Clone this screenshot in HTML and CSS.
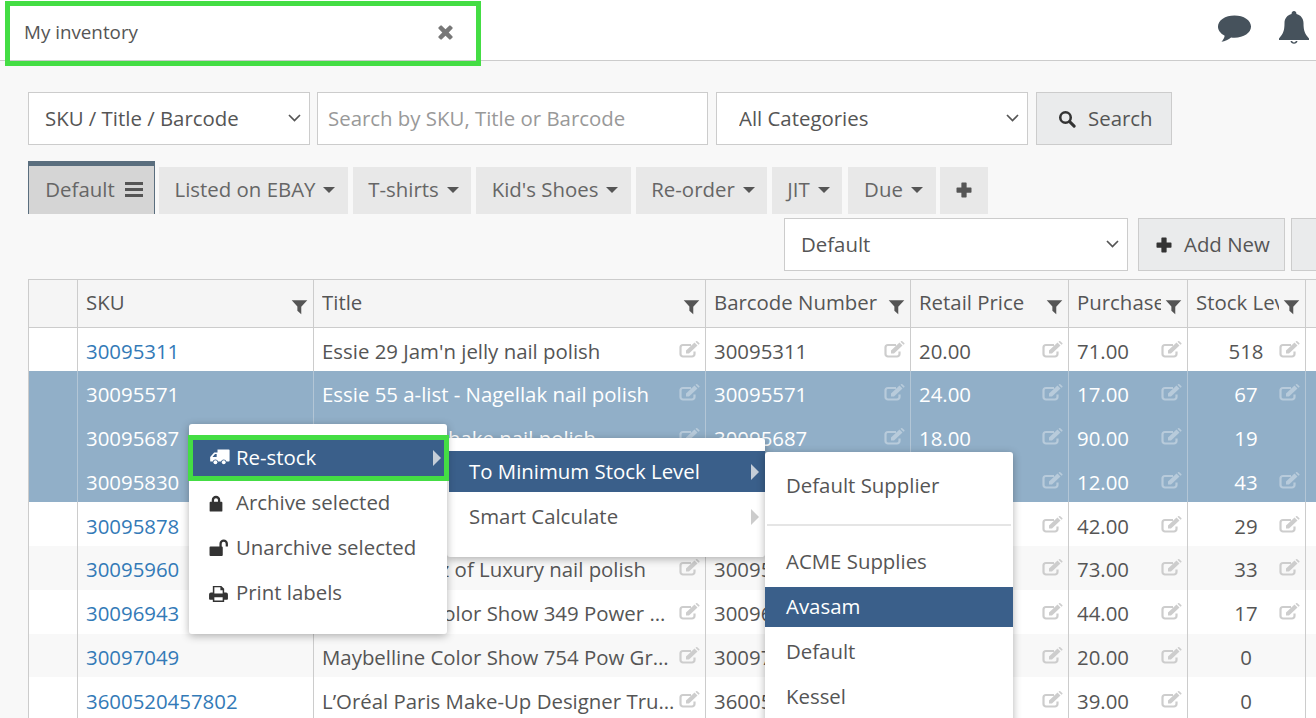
FILE: index.html
```html
<!DOCTYPE html>
<html lang="en">
<head>
<meta charset="utf-8">
<title>My inventory</title>
<link rel="stylesheet" href="styles.css">
</head>
<body>
<svg class="defs" width="0" height="0" aria-hidden="true">
  <symbol id="i-filter" viewBox="0 0 24 24"><path d="M1 3h22l-8.500 9.500V23l-5.500-5v-6z"/></symbol>
  <symbol id="i-edit" viewBox="0 0 21 17"><path d="M15.500 10.500V13a2.500 2.500 0 0 1-2.500 2.500H4A2.500 2.500 0 0 1 1.500 13V6.500A2.500 2.500 0 0 1 4 4h8" fill="none" stroke="currentColor" stroke-width="2.200"/><path d="M7 12.500V9.500L15.500 1.500l3 3L10 12.500zM16.500.8 17.500 0h.5l2.500 2.300v.6l-1 .9z"/></symbol>
  <symbol id="i-x" viewBox="0 0 24 24"><path d="M12 7.500 17.200 2.300a1.500 1.500 0 0 1 2.100 0l2.400 2.400a1.500 1.500 0 0 1 0 2.100L16.500 12l5.200 5.200a1.500 1.500 0 0 1 0 2.100l-2.400 2.400a1.500 1.500 0 0 1-2.100 0L12 16.500l-5.200 5.200a1.500 1.500 0 0 1-2.100 0l-2.400-2.400a1.500 1.500 0 0 1 0-2.100L7.500 12 2.300 6.800a1.500 1.500 0 0 1 0-2.100l2.400-2.400a1.500 1.500 0 0 1 2.100 0z"/></symbol>
  <symbol id="i-comment" viewBox="0 0 36 30"><path d="M18 1C8.500 1 1 6 1 12.500c0 3.900 2.700 7.300 6.900 9.400-.4 2.400-1.700 4.500-3.300 6.100 3.500-.3 7.300-2 9.900-4.300 1.100.2 2.300.3 3.500.3 9.500 0 17-5 17-11.500S27.500 1 18 1z"/></symbol>
  <symbol id="i-bell" viewBox="0 0 32 34"><path d="M16 1a2.500 2.500 0 0 0-2.400 3C9.300 5 6.500 8.500 6.500 13c0 8-1.500 11-5.500 15.500V30h30v-1.500C27 24 25.500 21 25.500 13c0-4.500-2.800-8-7.100-9A2.500 2.500 0 0 0 16 1z"/><path d="M12.500 31a3.600 3.600 0 0 0 7 0h-1.600a2 2 0 0 1-3.800 0z"/></symbol>
  <symbol id="i-search" viewBox="0 0 24 24"><circle cx="10" cy="10" r="7" fill="none" stroke="currentColor" stroke-width="3.400"/><path d="M15.500 15.500 21.500 21.500" fill="none" stroke="currentColor" stroke-width="4" stroke-linecap="round"/></symbol>
  <symbol id="i-plus" viewBox="0 0 24 24"><path d="M9.500 2h5a1 1 0 0 1 1 1v5.500H21a1 1 0 0 1 1 1v5a1 1 0 0 1-1 1h-5.500V21a1 1 0 0 1-1 1h-5a1 1 0 0 1-1-1v-5.500H3a1 1 0 0 1-1-1v-5a1 1 0 0 1 1-1h5.500V3a1 1 0 0 1 1-1z"/></symbol>
  <symbol id="i-truck" viewBox="0 0 24 20"><path fill-rule="evenodd" d="M9 1h13.500a1 1 0 0 1 1 1v12.500a1 1 0 0 1-1 1h-2.800a3.300 3.300 0 0 0-6.400 0H9.700a3.300 3.300 0 0 0-6.400 0H1a.8.800 0 0 1-.8-.8V10L5 4.600h4zM6 6.400 3 10h5V6.400z"/><circle cx="6.500" cy="16.300" r="2.300"/><circle cx="16.500" cy="16.300" r="2.300"/></symbol>
  <symbol id="i-lock" viewBox="0 0 16 20"><path fill-rule="evenodd" d="M3 8V6a5 5 0 0 1 10 0v2h1.500a1 1 0 0 1 1 1v9.500a1 1 0 0 1-1 1h-13a1 1 0 0 1-1-1V9a1 1 0 0 1 1-1zm2.700 0h4.600V6a2.300 2.300 0 0 0-4.600 0z"/></symbol>
  <symbol id="i-unlock" viewBox="0 0 20 18"><path d="M1.500 8H11V5a4.500 4.500 0 0 1 9 0v3h-2.400V5a2.100 2.100 0 0 0-4.200 0v3h.1a1 1 0 0 1 1 1v8a1 1 0 0 1-1 1H1.500a1 1 0 0 1-1-1V9a1 1 0 0 1 1-1z"/></symbol>
  <symbol id="i-print" viewBox="0 0 20 18"><path fill-rule="evenodd" d="M4 1h9l3 3v4h2a2 2 0 0 1 2 2v4.500a1 1 0 0 1-1 1h-3V18H4v-2.500H1a1 1 0 0 1-1-1V10a2 2 0 0 1 2-2h2zm1.600 1.500V9h8.800V5.500H12V2.500zM5.600 13v3.400h8.800V13z"/></symbol>
  <symbol id="i-chev" viewBox="0 0 13 8"><path d="M1 1l5.500 5.500L12 1" fill="none" stroke="currentColor" stroke-width="1.700"/></symbol>
</svg>

<div class="page">
  <header class="topbar">
    <div class="tab-outline">
      <span class="tab-title">My inventory</span>
      <svg class="icon tab-close"><use href="#i-x"/></svg>
    </div>
    <div class="top-icons">
      <svg class="icon icon-comment"><use href="#i-comment"/></svg>
      <svg class="icon icon-bell"><use href="#i-bell"/></svg>
    </div>
  </header>

  <main class="content">
    <div class="search-row">
      <div class="select-wrap field-type"><select class="field"><option>SKU / Title / Barcode</option></select><svg class="icon chev"><use href="#i-chev"/></svg></div>
      <input class="field field-search" type="text" placeholder="Search by SKU, Title or Barcode">
      <div class="select-wrap field-cat"><select class="field"><option>All Categories</option></select><svg class="icon chev"><use href="#i-chev"/></svg></div>
      <button class="btn btn-search"><svg class="icon icon-btn"><use href="#i-search"/></svg>Search</button>
    </div>

    <nav class="views">
      <div class="view view-active">Default<span class="bars"><i></i><i></i><i></i></span></div>
      <div class="view view-ebay">Listed on EBAY<span class="caret"></span></div>
      <div class="view view-tshirt">T-shirts<span class="caret"></span></div>
      <div class="view view-kids">Kid's Shoes<span class="caret"></span></div>
      <div class="view view-reorder">Re-order<span class="caret"></span></div>
      <div class="view view-jit">JIT<span class="caret"></span></div>
      <div class="view view-due">Due<span class="caret"></span></div>
      <div class="view view-plus"><svg class="icon icon-plus"><use href="#i-plus"/></svg></div>
    </nav>

    <div class="action-row">
      <div class="select-wrap field-view"><select class="field"><option>Default</option></select><svg class="icon chev"><use href="#i-chev"/></svg></div>
      <button class="btn btn-add"><svg class="icon icon-btn"><use href="#i-plus"/></svg>Add New</button>
      <button class="btn btn-more"></button>
    </div>

    <table class="grid">
      <colgroup>
        <col class="c-check"><col class="c-sku"><col class="c-title"><col class="c-bar"><col class="c-retail"><col class="c-purchase"><col class="c-stock"><col class="c-rest">
      </colgroup>
      <thead>
        <tr>
          <th></th>
          <th><div class="head"><span class="head-label">SKU</span><svg class="icon icon-filter"><use href="#i-filter"/></svg></div></th>
          <th><div class="head"><span class="head-label">Title</span><svg class="icon icon-filter"><use href="#i-filter"/></svg></div></th>
          <th><div class="head"><span class="head-label">Barcode Number</span><svg class="icon icon-filter"><use href="#i-filter"/></svg></div></th>
          <th><div class="head"><span class="head-label">Retail Price</span><svg class="icon icon-filter"><use href="#i-filter"/></svg></div></th>
          <th><div class="head"><span class="head-label">Purchase Price</span><svg class="icon icon-filter"><use href="#i-filter"/></svg></div></th>
          <th><div class="head"><span class="head-label">Stock Level</span><svg class="icon icon-filter"><use href="#i-filter"/></svg></div></th>
          <th></th>
        </tr>
      </thead>
      <tbody>
        <tr>
          <td></td><td><a class="sku">30095311</a></td>
          <td><div class="cell"><span class="txt">Essie 29 Jam'n jelly nail polish</span><svg class="icon icon-edit"><use href="#i-edit"/></svg></div></td>
          <td><div class="cell"><span class="txt">30095311</span><svg class="icon icon-edit"><use href="#i-edit"/></svg></div></td>
          <td><div class="cell"><span class="txt">20.00</span><svg class="icon icon-edit"><use href="#i-edit"/></svg></div></td>
          <td><div class="cell"><span class="txt">71.00</span><svg class="icon icon-edit"><use href="#i-edit"/></svg></div></td>
          <td><div class="cell cell-num"><span class="num">518</span><svg class="icon icon-edit"><use href="#i-edit"/></svg></div></td><td></td>
        </tr>
        <tr class="selected">
          <td></td><td><a class="sku">30095571</a></td>
          <td><div class="cell"><span class="txt">Essie 55 a-list - Nagellak nail polish</span><svg class="icon icon-edit"><use href="#i-edit"/></svg></div></td>
          <td><div class="cell"><span class="txt">30095571</span><svg class="icon icon-edit"><use href="#i-edit"/></svg></div></td>
          <td><div class="cell"><span class="txt">24.00</span><svg class="icon icon-edit"><use href="#i-edit"/></svg></div></td>
          <td><div class="cell"><span class="txt">17.00</span><svg class="icon icon-edit"><use href="#i-edit"/></svg></div></td>
          <td><div class="cell cell-num"><span class="num">67</span><svg class="icon icon-edit"><use href="#i-edit"/></svg></div></td><td></td>
        </tr>
        <tr class="selected">
          <td></td><td><a class="sku">30095687</a></td>
          <td><div class="cell"><span class="txt">Essie 30 Lilt Shake nail polish</span><svg class="icon icon-edit"><use href="#i-edit"/></svg></div></td>
          <td><div class="cell"><span class="txt">30095687</span><svg class="icon icon-edit"><use href="#i-edit"/></svg></div></td>
          <td><div class="cell"><span class="txt">18.00</span><svg class="icon icon-edit"><use href="#i-edit"/></svg></div></td>
          <td><div class="cell"><span class="txt">90.00</span><svg class="icon icon-edit"><use href="#i-edit"/></svg></div></td>
          <td><div class="cell cell-num"><span class="num">19</span><svg class="icon icon-edit icon-off"><use href="#i-edit"/></svg></div></td><td></td>
        </tr>
        <tr class="selected">
          <td></td><td><a class="sku">30095830</a></td>
          <td><div class="cell"><span class="txt">Essie 12 Ballet Slippers nail polish</span><svg class="icon icon-edit"><use href="#i-edit"/></svg></div></td>
          <td><div class="cell"><span class="txt">30095830</span><svg class="icon icon-edit"><use href="#i-edit"/></svg></div></td>
          <td><div class="cell"><span class="txt">31.00</span><svg class="icon icon-edit"><use href="#i-edit"/></svg></div></td>
          <td><div class="cell"><span class="txt">12.00</span><svg class="icon icon-edit"><use href="#i-edit"/></svg></div></td>
          <td><div class="cell cell-num"><span class="num">43</span><svg class="icon icon-edit"><use href="#i-edit"/></svg></div></td><td></td>
        </tr>
        <tr>
          <td></td><td><a class="sku">30095878</a></td>
          <td><div class="cell"><span class="txt">Essie 24 Borrowed nail polish</span><svg class="icon icon-edit"><use href="#i-edit"/></svg></div></td>
          <td><div class="cell"><span class="txt">30095878</span><svg class="icon icon-edit"><use href="#i-edit"/></svg></div></td>
          <td><div class="cell"><span class="txt">26.00</span><svg class="icon icon-edit"><use href="#i-edit"/></svg></div></td>
          <td><div class="cell"><span class="txt">42.00</span><svg class="icon icon-edit"><use href="#i-edit"/></svg></div></td>
          <td><div class="cell cell-num"><span class="num">29</span><svg class="icon icon-edit"><use href="#i-edit"/></svg></div></td><td></td>
        </tr>
        <tr class="alt">
          <td></td><td><a class="sku">30095960</a></td>
          <td><div class="cell"><span class="txt">Essie 50 Whiz of Luxury nail polish</span><svg class="icon icon-edit"><use href="#i-edit"/></svg></div></td>
          <td><div class="cell"><span class="txt">30095960</span><svg class="icon icon-edit"><use href="#i-edit"/></svg></div></td>
          <td><div class="cell"><span class="txt">35.00</span><svg class="icon icon-edit"><use href="#i-edit"/></svg></div></td>
          <td><div class="cell"><span class="txt">73.00</span><svg class="icon icon-edit"><use href="#i-edit"/></svg></div></td>
          <td><div class="cell cell-num"><span class="num">33</span><svg class="icon icon-edit"><use href="#i-edit"/></svg></div></td><td></td>
        </tr>
        <tr>
          <td></td><td><a class="sku">30096943</a></td>
          <td><div class="cell"><span class="txt">Maybelline Color Show 349 Power Pink nail</span><svg class="icon icon-edit"><use href="#i-edit"/></svg></div></td>
          <td><div class="cell"><span class="txt">30096943</span><svg class="icon icon-edit"><use href="#i-edit"/></svg></div></td>
          <td><div class="cell"><span class="txt">28.00</span><svg class="icon icon-edit"><use href="#i-edit"/></svg></div></td>
          <td><div class="cell"><span class="txt">44.00</span><svg class="icon icon-edit"><use href="#i-edit"/></svg></div></td>
          <td><div class="cell cell-num"><span class="num">17</span><svg class="icon icon-edit"><use href="#i-edit"/></svg></div></td><td></td>
        </tr>
        <tr class="alt">
          <td></td><td><a class="sku">30097049</a></td>
          <td><div class="cell"><span class="txt">Maybelline Color Show 754 Pow Grey nail polish</span><svg class="icon icon-edit"><use href="#i-edit"/></svg></div></td>
          <td><div class="cell"><span class="txt">30097049</span><svg class="icon icon-edit"><use href="#i-edit"/></svg></div></td>
          <td><div class="cell"><span class="txt">22.00</span><svg class="icon icon-edit"><use href="#i-edit"/></svg></div></td>
          <td><div class="cell"><span class="txt">20.00</span><svg class="icon icon-edit"><use href="#i-edit"/></svg></div></td>
          <td><div class="cell cell-num"><span class="num">0</span><svg class="icon icon-edit icon-off"><use href="#i-edit"/></svg></div></td><td></td>
        </tr>
        <tr>
          <td></td><td><a class="sku">3600520457802</a></td>
          <td><div class="cell"><span class="txt">L’Oréal Paris Make-Up Designer Trucco Lips</span><svg class="icon icon-edit"><use href="#i-edit"/></svg></div></td>
          <td><div class="cell"><span class="txt">3600520457802</span><svg class="icon icon-edit"><use href="#i-edit"/></svg></div></td>
          <td><div class="cell"><span class="txt">27.00</span><svg class="icon icon-edit"><use href="#i-edit"/></svg></div></td>
          <td><div class="cell"><span class="txt">39.00</span><svg class="icon icon-edit"><use href="#i-edit"/></svg></div></td>
          <td><div class="cell cell-num"><span class="num">0</span><svg class="icon icon-edit icon-off"><use href="#i-edit"/></svg></div></td><td></td>
        </tr>
      </tbody>
    </table>
  </main>

  <ul class="menu menu-main">
    <li class="item item-restock"><svg class="icon icon-m icon-truck"><use href="#i-truck"/></svg>Re-stock<span class="arrow arrow-on"></span></li>
    <li class="item"><svg class="icon icon-m icon-lock"><use href="#i-lock"/></svg>Archive selected</li>
    <li class="item"><svg class="icon icon-m icon-unlock"><use href="#i-unlock"/></svg>Unarchive selected</li>
    <li class="item"><svg class="icon icon-m icon-print"><use href="#i-print"/></svg>Print labels</li>
  </ul>

  <ul class="menu menu-sub">
    <li class="sub-item sub-on">To Minimum Stock Level<span class="arrow arrow-on"></span></li>
    <li class="sub-item">Smart Calculate<span class="arrow"></span></li>
  </ul>

  <ul class="menu menu-supplier">
    <li class="sup-item sup-first">Default Supplier</li>
    <li class="sup-divider"></li>
    <li class="sup-item">ACME Supplies</li>
    <li class="sup-item sup-on">Avasam</li>
    <li class="sup-item">Default</li>
    <li class="sup-item">Kessel</li>
  </ul>
</div>
</body>
</html>
```

FILE: styles.css
```css
* { box-sizing: border-box; }
html, body { margin: 0; padding: 0; height: 100%; }
body {
  font-family: "Open Sans", "Liberation Sans", sans-serif;
  font-size: 20.4px;
  color: #555;
  background: #f8f8f8;
  overflow: hidden;
}
.defs { position: absolute; }
.icon { display: block; fill: currentColor; flex: none; }

.page { position: relative; width: 1316px; height: 718px; overflow: hidden; }

/* top bar */
.topbar {
  height: 61px;
  background: #fff;
  border-bottom: 1px solid #ccc;
  display: flex;
  justify-content: space-between;
  align-items: flex-start;
}
.tab-outline {
  position: relative;
  z-index: 2;
  width: 476px;
  height: 65px;
  margin: 1px 0 0 5px;
  border: 5px solid #44dd44;
  background: linear-gradient(#fff 54px, #ccc 54px);
  display: flex;
  align-items: flex-start;
  justify-content: space-between;
  padding: 12px 22px 0 14px;
  font-size: 18.800px;
  line-height: 28px;
}
.tab-title { color: #555; }
.tab-close { width: 17px; height: 17px; margin-top: 6px; color: #777; }
.top-icons { display: flex; gap: 26px; padding: 14px 6px 0 0; color: #46525c; align-items: flex-start; }
.icon-comment { width: 35px; height: 30px; }
.icon-bell { width: 32px; height: 34px; margin-top: -4px; }

/* content */
.content { padding: 31px 0 0 28px; width: 1500px; }
.search-row { display: flex; height: 53px; }
.field {
  height: 53px;
  width: 100%;
  background-color: #fff;
  border: 1px solid #ccc;
  border-radius: 0;
  font: inherit;
  color: #555;
  outline: none;
}
select.field { appearance: none; -webkit-appearance: none; padding: 0 30px 2px 16px; }
.select-wrap { position: relative; flex: none; }
.chev { position: absolute; right: 9px; top: 22px; width: 13px; height: 8px; color: #555; pointer-events: none; }
.field-type { width: 282px; margin-right: 7px; }
.field-search { width: 391px; margin-right: 8px; padding: 0 10px 2px; }
.field-search::placeholder { color: #999; opacity: 1; }
.field-cat { width: 312px; margin-right: 8px; }
.field-cat select.field { padding-left: 22px; }
.btn {
  height: 53px;
  display: flex;
  align-items: center;
  background: #eaebec;
  border: 1px solid #ccc;
  font: inherit;
  color: #555;
  padding: 0 0 2px;
}
.icon-btn { width: 18px; height: 18px; margin-top: 2px; color: #333; }
.btn-search { width: 136px; padding-left: 21px; gap: 12px; }
.btn-add { width: 147px; padding-left: 16px; gap: 11px; margin-left: 10px; }
.btn-more { width: 80px; margin-left: 6px; }

/* saved views */
.views { display: flex; align-items: flex-end; height: 53px; margin-top: 16px; gap: 4px; }
.view {
  height: 47px;
  background: #e8e8e8;
  display: flex;
  align-items: center;
  justify-content: center;
  color: #666;
  padding: 0 0 4px 3px;
  flex: none;
}
.view-active {
  height: 53px;
  width: 127px;
  background: #d5d5d5;
  border: 1px solid #5a6e7e;
  border-top-width: 5px;
  border-bottom: 0;
  gap: 10px;
  padding: 0 0 2px 5px;
}
.view-ebay { width: 189px; }
.view-tshirt { width: 118px; margin-left: 1px; }
.view-kids { width: 155px; margin-left: 1px; }
.view-reorder { width: 131px; margin-left: 1px; }
.view-jit { width: 70px; margin-left: 1px; }
.view-due { width: 88px; margin-left: 2px; }
.view-plus { width: 48px; color: #555; padding: 0 0 2px; }
.icon-plus { width: 18px; height: 18px; }
.bars { display: flex; flex-direction: column; gap: 3px; width: 18px; }
.bars i { display: block; height: 3px; background: #555; }
.caret {
  width: 0; height: 0;
  margin: 2px 0 0 8px;
  border-left: 6px solid transparent;
  border-right: 6px solid transparent;
  border-top: 6px solid #555;
}

.action-row { display: flex; height: 53px; margin: 4px 0 0 756px; }
.field-view { width: 344px; }

/* table */
.grid {
  table-layout: fixed;
  border-collapse: separate;
  border-spacing: 0;
  width: 1400px;
  margin-top: 8px;
  border-top: 1px solid #ccc;
  border-left: 1px solid #ccc;
}
.c-check { width: 49px; }
.c-sku { width: 236px; }
.c-title { width: 392px; }
.c-bar { width: 205px; }
.c-retail { width: 158px; }
.c-purchase { width: 119px; }
.c-stock { width: 118px; }
.c-rest { width: 123px; }
.grid th {
  height: 48px;
  background: #f5f5f5;
  border-bottom: 1px solid #ccc;
  border-right: 1px solid #ccc;
  font-weight: 400;
  padding: 0 5px 4px 8px;
  text-align: left;
}
.head { display: flex; align-items: center; }
.head-label { flex: 1; min-width: 0; margin-right: 4px; overflow: hidden; white-space: nowrap; color: #555; }
.icon-filter { width: 17px; height: 17px; margin-top: 9px; color: #555; }
.grid td {
  height: 43.750px;
  padding: 3px 5px 0 8px;
  border-right: 1px solid #ccc;
  background: #fff;
  white-space: nowrap;
}
.grid tbody tr:first-child td { height: 43px; }
.grid tr.alt td { background: #f8f8f8; }
.grid tr.selected td { background: #91afc8; color: #fff; border-right-color: #b3c6d6; }
.sku { color: #337ab7; }
tr.selected .sku { color: #fff; }
.cell { display: flex; align-items: center; }
.txt { flex: 1; min-width: 0; overflow: hidden; text-overflow: ellipsis; }
.num { flex: 1; text-align: center; }
.icon-edit { width: 21px; height: 17px; margin-left: 4px; margin-top: -3px; color: #cdcdcd; }
.cell-num .icon-edit { margin-left: -17px; }
tr.selected .icon-edit { color: #b8cbdb; }
.icon-off { visibility: hidden; }

/* context menus */
.menu {
  position: absolute;
  margin: 0;
  padding: 0;
  list-style: none;
  background: #fff;
  border-radius: 3px;
  box-shadow: 0 2px 8px rgba(0, 0, 0, .3);
  color: #555;
}
.menu-main { left: 189px; top: 424px; width: 258px; height: 210px; padding-top: 11px; z-index: 5; }
.item {
  height: 45px;
  display: flex;
  align-items: center;
  position: relative;
  padding: 0 0 4px 47px;
}
.icon-m { position: absolute; color: #333; }
.item .icon-lock { left: 20px; top: 14px; width: 14px; height: 17px; }
.item .icon-unlock { left: 20px; top: 13px; width: 19px; height: 17px; }
.item .icon-print { left: 20px; top: 14px; width: 19px; height: 17px; }
.item-restock {
  margin: 0 -2px 0 -1px;
  height: 46px;
  background: #3a5f8a;
  color: #fff;
  border: 5px solid #44dd44;
  padding: 0 0 2px 43px;
}
.item-restock .icon-truck { left: 17px; top: 8px; width: 20px; height: 18px; color: #fff; }
.arrow {
  position: absolute;
  right: 3px;
  top: 50%;
  margin-top: -8px;
  width: 0; height: 0;
  border-top: 8px solid transparent;
  border-bottom: 8px solid transparent;
  border-left: 8px solid #ccc;
}
.arrow-on { border-left-color: #c5ced8; }
.menu-sub { left: 447px; top: 438px; width: 318px; height: 119px; padding-top: 13px; z-index: 4; }
.sub-item {
  height: 41px;
  display: flex;
  align-items: center;
  padding: 0 0 2px 20px;
  position: relative;
  margin-left: 2px;
}
.sub-item + .sub-item { margin-top: 4px; }
.sub-on { background: #3a5f8a; color: #fff; }
.sub-item .arrow { right: 6px; }
.menu-supplier { left: 765px; top: 452px; width: 248px; height: 300px; z-index: 4; padding-top: 14px; }
.sup-item { height: 40px; margin-bottom: 5px; display: flex; align-items: center; padding: 0 0 2px 21px; }
.sup-divider { height: 2px; background: #e5e5e5; margin: 18px 2px 16px; }
.sup-on { background: #3a5f8a; color: #fff; }
```
